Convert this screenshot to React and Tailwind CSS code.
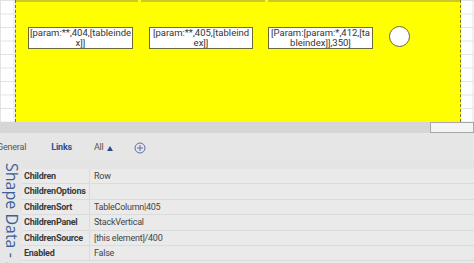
import React from 'react'

const rows = [
  ['Children', 'Row'],
  ['ChildrenOptions', ''],
  ['ChildrenSort', 'TableColumn|405'],
  ['ChildrenPanel', 'StackVertical'],
  ['ChildrenSource', '[this element]/400'],
  ['Enabled', 'False'],
]

const grid =
  'bg-white bg-[linear-gradient(to_right,#e2e2e2_1px,transparent_1px),linear-gradient(to_bottom,#e2e2e2_1px,transparent_1px)] bg-[size:13.5px_13.5px]'

function Box({ w, l1, l2 }) {
  return (
    <div
      className={`${w} h-[22px] shrink-0 bg-white border border-[#6b6b3a] flex flex-col items-center justify-center text-[9.5px] leading-[10px] text-[#333]`}
      style={{ fontFamily: 'Roboto, sans-serif' }}
    >
      <span>{l1}</span>
      <span>{l2}</span>
    </div>
  )
}

export default function App() {
  return (
    <div className="w-[474px] h-[263px] overflow-hidden flex flex-col bg-[#e6e6e6]" style={{ fontFamily: 'Roboto, sans-serif' }}>
      {/* canvas */}
      <div className={`h-[122px] flex ${grid}`}>
        <div className="w-[15px] shrink-0" />
        <div className="flex-1 flex flex-col bg-[#ffff00] border-x border-dashed border-[#77772a]">
          <div className="h-[2px] flex gap-[3px]">
            <div className="w-[122px] bg-[#c9c92a]" />
            <div className="w-[124px] bg-[#c9c92a]" />
            <div className="flex-1 bg-[#c9c92a]" />
          </div>
          <div className="flex items-start pt-[25px] pl-[12px]">
            <Box w="w-[105px]" l1="[param:**,404,[tableinde" l2="x]]" />
            <div className="w-[16px] shrink-0" />
            <Box w="w-[104px]" l1="[param:**,405,[tableind" l2="ex]]" />
            <div className="w-[15px] shrink-0" />
            <Box w="w-[105px]" l1="[Param:[param:*,412,[ta" l2="bleindex]],350]" />
            <div className="w-[16px] shrink-0" />
            <div className="w-[21px] h-[21px] mt-[-1px] rounded-full bg-white border border-[#6b6b3a]" />
          </div>
        </div>
        <div className="w-[13px] shrink-0" />
      </div>

      {/* scroll strip */}
      <div className="h-[11px] bg-[#d6d6d6] flex justify-end">
        <div className="w-[44px] h-[11px] bg-[#f4f4f4] border border-[#a8a8a8]" />
      </div>

      {/* tabs */}
      <div className="h-[28px] flex items-center text-[9px] tracking-[-0.2px] text-[#555] pt-[2px]">
        <span className="ml-[-3px]">General</span>
        <span className="ml-[25px] font-bold text-[#34508f]">Links</span>
        <span className="ml-[22px] flex items-center gap-[3px]">
          All
          <svg width="6" height="5" viewBox="0 0 6 5"><path d="M0 5 L3 0 L6 5 Z" fill="#2f4b8c" /></svg>
        </span>
        <svg className="ml-[21px]" width="12" height="12" viewBox="0 0 12 12">
          <circle cx="6" cy="6" r="5" fill="none" stroke="#5a6fa8" strokeWidth="1" />
          <path d="M6 3 V9 M3 6 H9" stroke="#5a6fa8" strokeWidth="1" />
        </svg>
      </div>

      {/* body */}
      <div className="flex-1 flex min-h-0">
        <div className="w-[22px] shrink-0 flex justify-center">
          <span
            className="[writing-mode:vertical-rl] text-[16px] leading-[16px] text-[#3c5f96] whitespace-nowrap mt-[2px] ml-[1px]"
            style={{ fontFamily: '"Open Sans", sans-serif' }}
          >
            Shape Data - Sh
          </span>
        </div>
        <div className="flex-1 flex flex-col pt-[8px] bg-[linear-gradient(to_bottom,#e4e4e4_8px,#eaeaea_8px)]">
          {rows.map(([k, v]) => (
            <div key={k} className="h-[15.4px] shrink-0 flex border-b border-[#dbdbdb] text-[9px] leading-[14px] tracking-[-0.25px]">
              <div className="w-[68px] shrink-0 pl-[2px] font-bold text-[#3a3a3a] border-r border-[#dbdbdb] whitespace-nowrap overflow-hidden">{k}</div>
              <div className="flex-1 pl-[4px] text-[#444] whitespace-nowrap">{v}</div>
            </div>
          ))}
        </div>
      </div>
    </div>
  )
}
